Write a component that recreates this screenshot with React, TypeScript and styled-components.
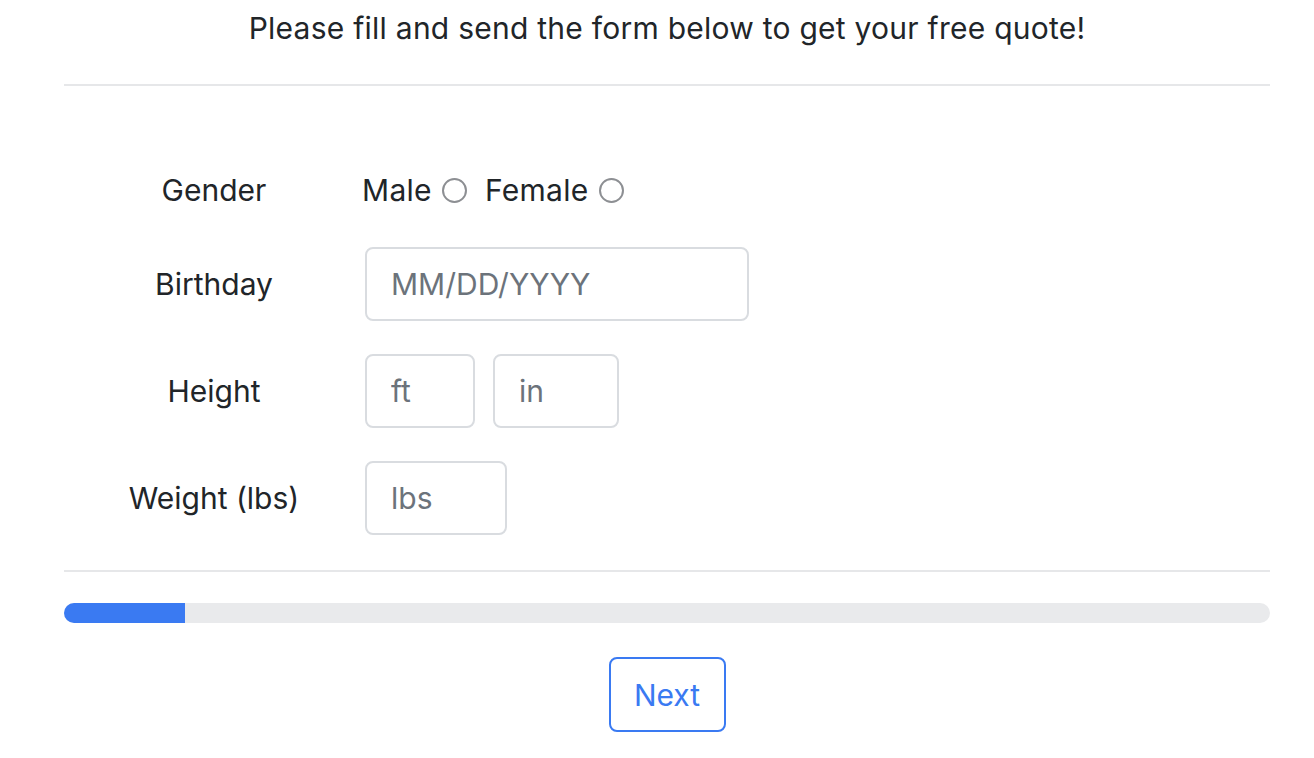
import * as React from 'react'
import styled, { createGlobalStyle } from 'styled-components'

const GlobalStyle = createGlobalStyle`
  html, body {
    margin: 0;
    padding: 0;
    background: #fff;
  }
  body {
    font-family: Inter, 'Liberation Sans', Arial, sans-serif;
    color: #212529;
  }
`

const App: React.FC = () => {
  const [gender, setGender] = React.useState<string>('')
  const progress = 10

  return (
    <>
      <GlobalStyle />
      <PageContainer>
        <Title>Please fill and send the form below to get your free quote!</Title>
        <Divider />
        <StyledForm onSubmit={(e) => e.preventDefault()}>
          <FormRow compact>
            <RowLabel>Gender</RowLabel>
            <Fields>
              <RadioGroup>
                <RadioLabel>
                  Male
                  <Radio
                    type='radio'
                    name='gender'
                    checked={gender === 'male'}
                    onChange={() => setGender('male')}
                  />
                </RadioLabel>
                <RadioLabel>
                  Female
                  <Radio
                    type='radio'
                    name='gender'
                    checked={gender === 'female'}
                    onChange={() => setGender('female')}
                  />
                </RadioLabel>
              </RadioGroup>
            </Fields>
          </FormRow>

          <FormRow>
            <RowLabel>Birthday</RowLabel>
            <Fields>
              <TextInput width={384} placeholder='MM/DD/YYYY' />
            </Fields>
          </FormRow>

          <FormRow>
            <RowLabel>Height</RowLabel>
            <Fields>
              <TextInput width={110} placeholder='ft' />
              <TextInput width={126} placeholder='in' />
            </Fields>
          </FormRow>

          <FormRow>
            <RowLabel>Weight (lbs)</RowLabel>
            <Fields>
              <TextInput width={142} placeholder='lbs' />
            </Fields>
          </FormRow>
        </StyledForm>
        <Divider />
        <ProgressTrack>
          <ProgressFill style={{ width: `${progress}%` }} />
        </ProgressTrack>
        <ButtonContainer>
          <NextButton type='button'>Next</NextButton>
        </ButtonContainer>
      </PageContainer>
    </>
  )
}

export default App

const PageContainer = styled.div`
  margin: 0 44px 0 64px;
  display: flex;
  flex-direction: column;
`

const Title = styled.p`
  margin: 6px 0 0;
  font-size: 30px;
  line-height: 45px;
  letter-spacing: 0.25px;
  text-align: center;
`

const Divider = styled.hr`
  margin: 33px 0 0;
  border: 0;
  border-top: 2px solid #e6e7e9;
  height: 0;
  width: 100%;
`

const StyledForm = styled.form`
  margin: 80px 0 0;
  display: flex;
  flex-direction: column;
  gap: 33px;
  & + hr {
    margin-top: 35px;
  }
`

const FormRow = styled.div<{ compact?: boolean }>`
  display: flex;
  align-items: center;
  height: ${(p) => (p.compact ? 48 : 74)}px;
`

const RowLabel = styled.label`
  width: 300px;
  flex: none;
  text-align: center;
  font-size: 30px;
  line-height: 45px;
`

const Fields = styled.div`
  display: flex;
  align-items: center;
  gap: 18px;
  padding-left: 1px;
`

const RadioGroup = styled.div`
  display: flex;
  align-items: center;
  gap: 18px;
  margin-left: -3px;
`

const RadioLabel = styled.label`
  display: inline-flex;
  align-items: center;
  font-size: 30px;
  line-height: 45px;
  letter-spacing: 0.3px;
`

const Radio = styled.input`
  appearance: none;
  margin: 0 0 0 10px;
  width: 25px;
  height: 25px;
  border: 2px solid #8d8f93;
  border-radius: 50%;
  background: #fff;
  box-sizing: border-box;
  &:checked {
    border: 7px solid #3a7af2;
  }
`

const TextInput = styled.input<{ width: number }>`
  box-sizing: border-box;
  width: ${(p) => p.width}px;
  height: 74px;
  padding: 0 24px;
  border: 2px solid #d9dce0;
  border-radius: 8px;
  font-family: Inter, 'Liberation Sans', Arial, sans-serif;
  font-size: 30px;
  color: #212529;
  outline: none;
  &::placeholder {
    color: #6c737b;
  }
`

const ProgressTrack = styled.div`
  margin-top: 31px;
  height: 20px;
  border-radius: 10px;
  background: #e9eaec;
  overflow: hidden;
`

const ProgressFill = styled.div`
  height: 100%;
  background: #3a7af2;
`

const ButtonContainer = styled.div`
  margin-top: 34px;
  display: flex;
  justify-content: center;
`

const NextButton = styled.button`
  box-sizing: border-box;
  width: 117px;
  height: 75px;
  border: 2px solid #3a7af2;
  border-radius: 8px;
  background: #fff;
  color: #3a7af2;
  font-family: Inter, 'Liberation Sans', Arial, sans-serif;
  font-size: 30px;
  cursor: pointer;
`
